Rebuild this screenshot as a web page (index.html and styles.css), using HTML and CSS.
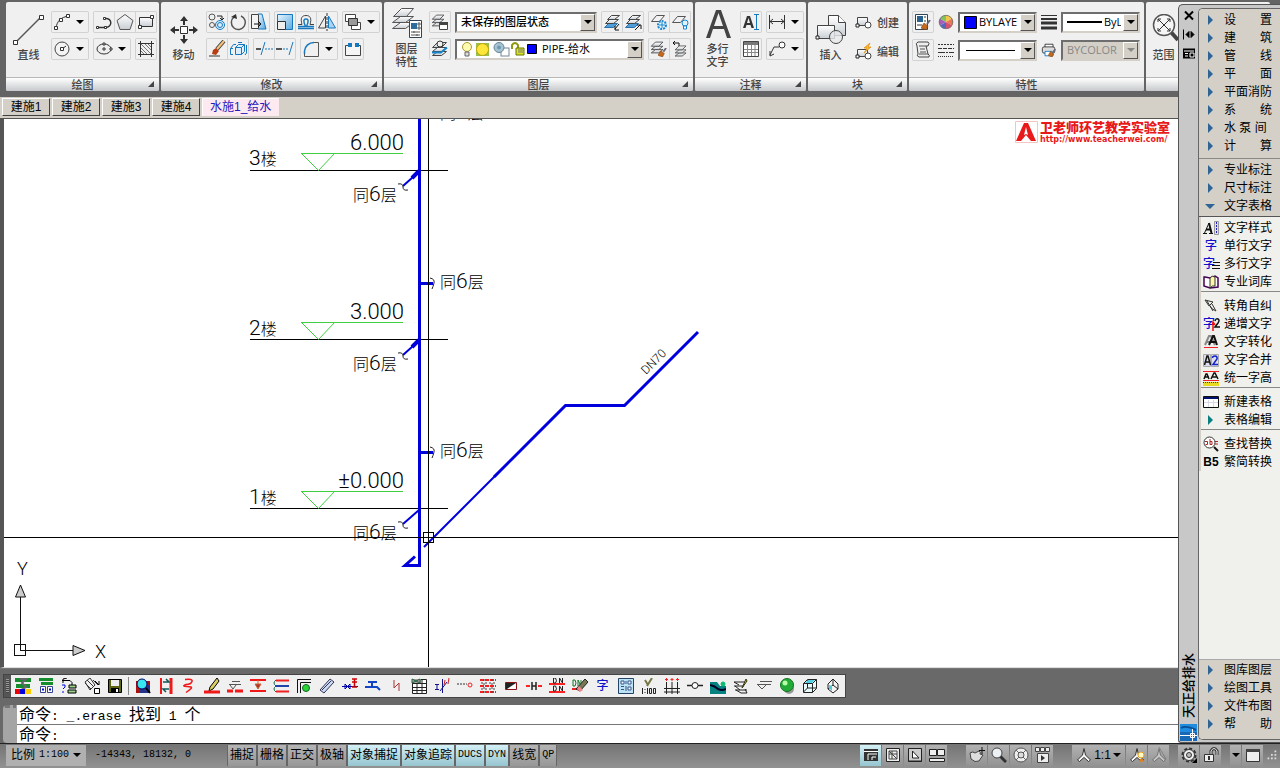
FILE: index.html
```html
<!DOCTYPE html>
<html lang="zh-CN">
<head>
<meta charset="utf-8">
<title>天正给排水</title>
<link rel="stylesheet" href="styles.css">
</head>
<body>
<svg class="defs" aria-hidden="true">
<defs>
<linearGradient id="steel" x1="0" y1="0" x2="0" y2="1"><stop offset="0" stop-color="#fff"/><stop offset="1" stop-color="#c9ced4"/></linearGradient>
<linearGradient id="sky" x1="0" y1="0" x2="1" y2="1"><stop offset="0" stop-color="#eaf6ff"/><stop offset="1" stop-color="#5aa9e0"/></linearGradient>
<symbol id="stack" viewBox="0 0 18 18"><g fill="url(#steel)" stroke="#444"><path d="M1.5 15.5h9l5-4h-9z"/><path d="M1.5 11.5h9l5-4h-9z"/><path d="M1.5 7.500h9l5-5h-9z"/></g></symbol>
<symbol id="bluestack" viewBox="0 0 18 18"><path fill="#4f9fdc" stroke="#2c6ea6" d="M1.500 14.500h9l4-4h-9z"/><g fill="url(#steel)" stroke="#444"><path d="M2.500 10.500h8l5-4h-9z"/><path d="M4.500 6.500h7l5-4h-8z"/></g></symbol>
<symbol id="brush" viewBox="0 0 10 10"><path d="M9 0 6 4" stroke="#667" stroke-width="2"/><path d="M3 3 7 6 5 10 0 8z" fill="#c4691d" stroke="#7a3a0b" stroke-width=".6"/></symbol>
<symbol id="person" viewBox="0 0 16 16"><path d="M8 1.500 6.500 8 1.500 13l2 1.500 4.500-4 4.500 4 2-1.500-5-5z" fill="#f5f5f5" stroke="#333"/></symbol>
</defs>
</svg>
<div class="app">
<header class="ribbon">
  <section class="panel draw">
    <div class="body">
      <button class="big"><svg width="32" height="32" viewBox="0 0 32 32"><path d="M3 28 28 3" stroke="#555" stroke-width="1.500"/><path d="M.5 26.500h4v4h-4zM26.500 1.500h4v4h-4z" fill="#fff" stroke="#333"/></svg><span>直线</span></button>
      <div class="rows">
        <div class="row">
          <div class="group"><button aria-label="圆弧"><svg width="18" height="18" viewBox="0 0 18 18" fill="none"><path d="M3 15C4 8 8 4 16 3" stroke="#333"/><path d="M1.500 13.500h3v3h-3zM6.500 5.500h3v3h-3zM13.500 1.500h3v3h-3z" fill="#fff" stroke="#333"/></svg></button><button class="dd" aria-label="圆弧选项"></button></div>
          <div class="group"><button aria-label="多段线"><svg width="18" height="18" viewBox="0 0 18 18" fill="none"><path d="M3 14.500h8c7-1 6-10-1-9" stroke="#333" stroke-width="1.500"/><path d="M1.500 13.500h2v2h-2zM9.500 13.500h2v2h-2zM8.500 4.500h2v2h-2z" fill="#fff" stroke="#333"/></svg></button><button aria-label="多边形"><svg width="18" height="18" viewBox="0 0 18 18"><path d="m9 1.500 8 6-3 9H4l-3-9z" fill="url(#steel)" stroke="#555"/></svg></button><button aria-label="矩形"><svg width="18" height="18" viewBox="0 0 18 18"><path d="M2.500 4.500h13v9h-13z" fill="url(#steel)" stroke="#333"/><path d="M1.500 12.500h3v3h-3zM13.500 2.500h3v3h-3z" fill="#fff" stroke="#333"/></svg></button></div>
        </div>
        <div class="row">
          <div class="group"><button aria-label="圆"><svg width="18" height="18" viewBox="0 0 18 18"><circle cx="9" cy="9" r="7" fill="#f4f4f4" stroke="#444"/><path d="m9 9 4-3" stroke="#333"/><path d="M7.500 7.500h3v3h-3z" fill="#fff" stroke="#333"/></svg></button><button class="dd" aria-label="圆选项"></button></div>
          <div class="group"><button aria-label="椭圆"><svg width="18" height="18" viewBox="0 0 18 18"><ellipse cx="9" cy="9" rx="7" ry="5" fill="#eee" stroke="#333"/><path d="M8 8h2v2H8zM15 8h2v2h-2zM8 3h2v2H8z" fill="#fff" stroke="#333"/></svg></button><button class="dd" aria-label="椭圆选项"></button></div>
          <div class="group"><button aria-label="图案填充"><svg width="18" height="18" viewBox="0 0 18 18" fill="none"><path d="M4 8l6 6M4 11l3 3M4 4l10 10M8 4l6 6M11 4l3 3" stroke="#777"/><path d="M1 3.500h16M1 14.500h16M3.500 1v16M14.500 1v16" stroke="#333"/></svg></button></div>
        </div>
      </div>
    </div>
    <footer><span>绘图</span><i class="launch"></i></footer>
  </section>

  <section class="panel modify">
    <div class="body">
      <button class="big"><svg width="32" height="32" viewBox="0 0 32 32"><path d="m16 2 4 5h-3v4h-2V7h-3zM16 30l4-5h-3v-4h-2v4h-3zM2 16l5-4v3h4v2H7v3zM30 16l-5-4v3h-4v2h4v3z" fill="#333"/><path d="M12.500 12.500h7v7h-7z" fill="#fff" stroke="#333"/></svg><span>移动</span></button>
      <div class="rows">
        <div class="row">
          <div class="group"><button aria-label="复制"><svg width="18" height="18" viewBox="0 0 18 18" fill="none"><circle cx="4" cy="4" r="3" stroke="#555"/><circle cx="4" cy="12" r="2.500" stroke="#555"/><circle cx="12" cy="12" r="4.500" fill="#d8edfa" stroke="#1679c0"/><circle cx="12" cy="12" r="2.500" stroke="#1679c0"/><path d="M9 3h5v3m-2-1 2 2 2-2" stroke="#222"/></svg></button><button aria-label="旋转"><svg width="18" height="18" viewBox="0 0 18 18"><path d="M5 4a7 7 0 1 0 7-1" fill="none" stroke="#555" stroke-width="1.500"/><path d="m7 1 1 5-6-2z" fill="#333"/></svg></button><button aria-label="拉伸"><svg width="18" height="18" viewBox="0 0 18 18"><path d="M8 1h4l4 15H8z" fill="url(#sky)" stroke="#1679c0"/><path d="M1.500 1.500h7v14h-7z" fill="#f4f4f4" stroke="#444"/><path d="M4 11h7m-3-3 3 3-3 3" fill="none" stroke="#111"/></svg></button></div>
          <div class="group"><button aria-label="缩放"><svg width="18" height="18" viewBox="0 0 18 18"><path d="M1.500 1.500h15v15h-7v-8h-8z" fill="url(#sky)" stroke="#1679c0"/><path d="M1.500 8.500h8v8h-8z" fill="#eee" stroke="#333"/></svg></button><button aria-label="偏移"><svg width="18" height="18" viewBox="0 0 18 18" fill="none"><path d="M1 11.500h4C3 5 5 2.500 9 2.500s6 2.500 4 9h4" stroke="#444"/><path d="M1 15.500h16M1 13.500h7.500C6 8 6.500 6 9 6s3 2 .5 7.500H17" stroke="#1679c0" stroke-width="1.500"/></svg></button><button aria-label="镜像"><svg width="18" height="18" viewBox="0 0 18 18"><path d="M7.500 3v12h-7z" fill="#eee" stroke="#444"/><path d="M10.500 3v12h7z" fill="#a9d4f5" stroke="#1679c0"/><path d="M9 0v18" stroke="#333" stroke-dasharray="3 1"/></svg></button></div>
          <div class="group"><button aria-label="绘图次序"><svg width="18" height="18" viewBox="0 0 18 18"><path d="M1.500 1.500h10v7h-10zM7.500 9.500h9v7h-9z" fill="#fff" stroke="#444"/><path d="M4.500 5.500h9v7h-9z" fill="#999" stroke="#333"/></svg></button><button class="dd" aria-label="绘图次序选项"></button></div>
        </div>
        <div class="row">
          <div class="group"><button aria-label="删除"><svg width="18" height="18" viewBox="0 0 18 18"><path d="m16 1-7 8" stroke="#444" stroke-width="4"/><path d="M16 1 9 9" stroke="#f5c37b" stroke-width="2"/><path d="m8 8-3 2-1 4 4 1 3-4z" fill="#b83e12"/><path d="M1 16h11" stroke="#333"/></svg></button><button aria-label="分解"><svg width="18" height="18" viewBox="0 0 18 18"><path d="M6.500 7.500h6v7h-6zl3-3h6l-3 3M15.500 4.500v7l-3 3" fill="#d9effc" stroke="#1679c0"/><path d="M4 8.500H1.500v6H4M1.500 8.500l3-4H7M9 2.500h4M17.500 5v8L16 15" fill="none" stroke="#1679c0"/></svg></button></div>
          <div class="group"><button aria-label="修剪"><svg width="18" height="18" viewBox="0 0 18 18"><path d="M1 9h5" stroke="#222" stroke-width="1.500"/><path d="M10 2 6 15" stroke="#1679c0"/><path d="M10 9h8" stroke="#1679c0" stroke-dasharray="2 1"/></svg></button><button aria-label="延伸"><svg width="18" height="18" viewBox="0 0 18 18"><path d="M0 9h6" stroke="#222" stroke-width="1.500"/><path d="M7 9h6" stroke="#1679c0" stroke-dasharray="2 1"/><path d="m17 2-4 13" stroke="#1679c0"/></svg></button></div>
          <div class="group"><button aria-label="圆角"><svg width="18" height="18" viewBox="0 0 18 18" fill="none"><path d="M2.500 14V11C3 6 7 2.500 12 2.500" stroke="#1679c0" stroke-width="1.500"/><path d="M12 2.500h4.500v14h-14v-3" stroke="#555"/></svg></button><button class="dd" aria-label="圆角选项"></button></div>
          <div class="group"><button aria-label="打断"><svg width="18" height="18" viewBox="0 0 18 18"><path d="M5 5.500H1.500v10h15v-10H13" fill="#f5f5f5" stroke="#444"/><path d="M4 3h4v4H4zM11 3h4v4h-4z" fill="#1679c0"/></svg></button></div>
        </div>
      </div>
    </div>
    <footer><span>修改</span><i class="launch"></i></footer>
  </section>

  <section class="panel layers">
    <div class="body">
      <button class="big"><svg width="32" height="32" viewBox="0 0 32 32"><g fill="url(#steel)" stroke="#555"><path d="M1.500 20.500h13l8-6h-13z"/><path d="M1.500 14.500h13l8-6h-13z"/><path d="M2.500 8.500h13l7-8h-12z"/></g><path d="M18.500 12.500h12v17h-12z" fill="#fff" stroke="#345"/><path d="M20 15h6v6h-6z" fill="#2d6d9d"/><path d="M27 15h2v2h-2zM27 19h2v2h-2zM20 24h9M20 27h9M23 23v2M26 26v2" stroke="#555" fill="none"/></svg><span>图层<br>特性</span></button>
      <div class="rows">
        <div class="row">
          <div class="group"><button aria-label="图层状态"><svg width="18" height="18" viewBox="0 0 18 18"><use href="#stack" width="15" height="15"/><path d="M8.500 9.500h8v7h-8z" fill="#fff" stroke="#444"/><path d="M8 9h9v3H8z" fill="#444"/></svg></button></div>
          <div class="combo state"><select aria-label="图层状态"><option>未保存的图层状态</option></select><span class="arrow"></span></div>
          <div class="group"><button aria-label="隔离"><svg width="18" height="18" viewBox="0 0 18 18"><use href="#bluestack"/><path d="m16 11-4 5m0-3v4h4" fill="none" stroke="#111"/></svg></button><button aria-label="取消隔离"><svg width="18" height="18" viewBox="0 0 18 18"><use href="#bluestack"/><path d="m11 17 5-5m-3 0h4v4" fill="none" stroke="#111"/></svg></button></div>
          <div class="group"><button aria-label="冻结"><svg width="18" height="18" viewBox="0 0 18 18" fill="none"><path d="M1.500 8.500h8l5-6h-8z" fill="#f2f2f2" stroke="#555"/><circle cx="12" cy="12" r="4" fill="#eaf6ff" stroke="#1887d0" stroke-width="2" stroke-dasharray="2 1"/><path d="M12 9v6M9 12h6" stroke="#1887d0"/></svg></button><button aria-label="关闭"><svg width="18" height="18" viewBox="0 0 18 18"><path d="M1.500 9.500h8l5-6h-8z" fill="#f2f2f2" stroke="#555"/><circle cx="14" cy="10" r="3" fill="#dff2ff" stroke="#1887d0"/><path d="M12.500 13h3v3h-3z" fill="#fff" stroke="#1887d0"/></svg></button></div>
        </div>
        <div class="row">
          <div class="group"><button aria-label="置为当前"><svg width="18" height="18" viewBox="0 0 18 18"><use href="#stack"/><path d="M1 12.500h9l6-5" fill="none" stroke="#1887d0" stroke-width="2"/><circle cx="9" cy="4" r="3" fill="#eee" stroke="#333"/></svg></button></div>
          <div class="combo layer"><svg width="81" height="16" viewBox="0 0 81 16"><circle cx="6" cy="6" r="4.500" fill="#fffbb0" stroke="#aa9b33"/><path d="M4 11h4v4H4z" fill="#ddd" stroke="#666"/><rect x="15" y="2" width="13" height="13" fill="#9abf4a"/><circle cx="21.500" cy="8.500" r="6" fill="#ffe638" stroke="#b9a212"/><rect x="40" y="7" width="8" height="8" fill="#fff" stroke="#789"/><circle cx="38" cy="6.500" r="5" fill="#a8c4d2" stroke="#648296"/><circle cx="38" cy="6.500" r="2" fill="#6f99b2"/><path d="M51 8V4q3-4 6 0v7" fill="none" stroke="#8d9a10" stroke-width="2"/><path d="M55 7h8v7h-8z" fill="#d9e229" stroke="#667400"/><path d="M57 9h5M57 11h5" stroke="#777"/><path d="M66.500 3.500h9v9h-9z" fill="#00f" stroke="#000"/></svg><select aria-label="图层"><option>PIPE-给水</option></select><span class="arrow"></span></div>
          <div class="group"><button aria-label="匹配图层"><svg width="18" height="18" viewBox="0 0 18 18"><use href="#stack" width="15" height="15"/><use href="#brush" x="8" y="8" width="9" height="9"/></svg></button><button aria-label="上一个图层"><svg width="18" height="18" viewBox="0 0 18 18"><use href="#stack" x="3" y="4" width="14" height="14"/><path d="M2 3h6v3M4 1 2 3l2 2" fill="none" stroke="#111"/></svg></button></div>
        </div>
      </div>
    </div>
    <footer><span>图层</span><i class="launch"></i></footer>
  </section>

  <section class="panel notes">
    <div class="body">
      <button class="big"><svg width="32" height="32" viewBox="0 0 32 32"><path d="M14 2h5l10 28h-4l-3-9H11l-3 9H4zM12 18h9L16.500 5z" fill="#444" fill-rule="evenodd"/></svg><span>多行<br>文字</span></button>
      <div class="rows">
        <div class="row">
          <div class="group"><button aria-label="单行文字"><svg width="18" height="18" viewBox="0 0 18 18"><path d="M5 3h3l4 12H9.500l-1-3h-4l-1 3H1zM5 10h3L6.500 5z" fill="#333" fill-rule="evenodd"/><path d="M12 1.500h5M14.500 2v14M12 16.500h5" stroke="#1679c0"/></svg></button></div>
          <div class="group"><button aria-label="标注"><svg width="18" height="18" viewBox="0 0 18 18"><path d="M1.500 2v14M16.500 2v14M2 8.500h14M5 6 2 8.500 5 11M13 6l3 2.500-3 2.500" fill="none" stroke="#333"/></svg></button><button class="dd" aria-label="标注选项"></button></div>
        </div>
        <div class="row">
          <div class="group"><button aria-label="表格"><svg width="18" height="18" viewBox="0 0 18 18"><path d="M1.500 1.500h15v15h-15z" fill="#fff" stroke="#444"/><path d="M2 2h14v3H2z" fill="#777"/><path d="M2 9.500h14M2 12.500h14M5.500 5v11M9.500 5v11M13 5v11" stroke="#888"/></svg></button></div>
          <div class="group"><button aria-label="引线"><svg width="18" height="18" viewBox="0 0 18 18"><path d="m2 15 4-8h5M2 11v5l4-2" fill="none" stroke="#333"/><circle cx="14" cy="5" r="3" fill="#fff" stroke="#333"/></svg></button><button class="dd" aria-label="引线选项"></button></div>
        </div>
      </div>
    </div>
    <footer><span>注释</span><i class="launch"></i></footer>
  </section>

  <section class="panel block">
    <div class="body">
      <button class="big"><svg width="32" height="32" viewBox="0 0 32 32"><path d="M13.500 1.500h10l7 7v13h-17z" fill="url(#steel)" stroke="#444"/><path d="M23.500 1.500v7h7" fill="#fff" stroke="#444"/><path d="M2.500 11.500h17v13h-17z" fill="url(#steel)" stroke="#444"/><circle cx="21" cy="23" r="6.500" fill="#e8eaec" fill-opacity=".8" stroke="#444"/><path d="M1 22h3v3H1z" fill="#fff" stroke="#222"/></svg><span>插入</span></button>
      <div class="rows">
        <button class="wide"><svg width="18" height="18" viewBox="0 0 18 18"><path d="M2.500 3.500h10v8h-10z" fill="url(#steel)" stroke="#444"/><circle cx="13" cy="11" r="3" fill="#fff" stroke="#444"/><path d="M1 10h3v3H1z" fill="#fff" stroke="#222"/></svg>创建</button>
        <button class="wide"><svg width="18" height="18" viewBox="0 0 18 18"><path d="M2.500 6.500h10v7h-10z" fill="url(#steel)" stroke="#444"/><circle cx="13" cy="13" r="3" fill="#fff" stroke="#444"/><path d="M1 12h3v3H1z" fill="#fff" stroke="#222"/><path d="m15 0-6 5h3l-3 5 7-6h-3z" fill="#ffbd24" stroke="#d57c00" stroke-width=".6"/></svg>编辑</button>
      </div>
    </div>
    <footer><span>块</span><i class="launch"></i></footer>
  </section>

  <section class="panel props">
    <div class="body">
      <div class="rows">
        <div class="row">
          <div class="group"><button aria-label="特性匹配"><svg width="18" height="18" viewBox="0 0 18 18"><path d="M1.500 1.500h12v15h-12z" fill="#fff" stroke="#345"/><path d="M3 3h6v6H3z" fill="#28608e"/><path d="M10 4h2M10 8h2M3 12h5" stroke="#333"/><use href="#brush" x="7" y="7" width="10" height="10"/></svg></button></div>
          <svg class="lead" viewBox="0 0 18 18"><path d="M9 9V1a8 8 0 0 1 7 4z" fill="#f4c64a"/><path d="m9 9 7-4a8 8 0 0 1 0 8z" fill="#ee7652"/><path d="m9 9 7 4a8 8 0 0 1-7 4z" fill="#d8506a"/><path d="M9 9v8a8 8 0 0 1-7-4z" fill="#5267c4"/><path d="m9 9-7 4a8 8 0 0 1 0-8z" fill="#a75fb5"/><path d="M9 9 2 5a8 8 0 0 1 7-4z" fill="#82c35b"/><circle cx="9" cy="9" r="7.500" fill="none" stroke="#777"/></svg>
          <div class="combo prop"><svg width="13" height="13" viewBox="0 0 13 13"><path d="M.5.500h12v12H.5z" fill="#00f" stroke="#000"/></svg><select aria-label="颜色"><option>BYLAYER</option></select><span class="arrow"></span></div>
          <svg class="lead" viewBox="0 0 16 16"><path d="M0 1.500h16" stroke="#333"/><path d="M0 5h16" stroke="#333" stroke-width="2"/><path d="M0 9h16M0 14h16" stroke="#333" stroke-width="3"/></svg>
          <div class="combo prop"><svg width="35" height="13" viewBox="0 0 35 13"><path d="M0 6h35" stroke="#000" stroke-width="2"/></svg><select aria-label="线宽"><option>ByLayer</option></select><span class="arrow"></span></div>
        </div>
        <div class="row">
          <div class="group"><button aria-label="列表"><svg width="18" height="18" viewBox="0 0 18 18"><path d="M4 1h10q2 1 0 4h-2l2 8q2 1 1 3H5q-3-1-1-3l-1-8Q1 2 4 1z" fill="#eee" stroke="#444"/><path d="M5 5h7M6 8h5M6 11h6M5 13h9" stroke="#555"/></svg></button></div>
          <svg class="lead" viewBox="0 0 16 16"><path d="M0 2.500h16" stroke="#333" stroke-dasharray="2 1"/><path d="M0 6.500h16" stroke="#333" stroke-dasharray="4 1"/><path d="M0 10.500h16" stroke="#333" stroke-dasharray="7 1 2 1"/><path d="M0 14.500h16" stroke="#333" stroke-dasharray="1 1"/></svg>
          <div class="combo prop"><svg width="51" height="13" viewBox="0 0 51 13"><path d="M2 6.500h49" stroke="#000"/></svg><select aria-label="线型"><option></option></select><span class="arrow"></span></div>
          <svg class="lead" viewBox="0 0 18 18"><path d="M4.500 6V2.500h9V6" fill="#fff" stroke="#333"/><rect x="1.500" y="5.500" width="14" height="7" rx="2" fill="#ddd" stroke="#333"/><path d="M4.500 10.500h8l1 5h-9z" fill="#fff" stroke="#1679c0"/><use href="#brush" x="8" y="8" width="9" height="9"/></svg>
          <div class="combo prop off"><select aria-label="打印样式" disabled><option>BYCOLOR</option></select><span class="arrow"></span></div>
        </div>
      </div>
    </div>
    <footer><span>特性</span></footer>
  </section>

  <section class="panel range">
    <div class="body">
      <button class="big"><svg width="32" height="32" viewBox="0 0 32 32"><path d="m22 17 8 9" stroke="#444" stroke-width="4"/><circle cx="16" cy="10" r="10.500" fill="#f6f6f6" stroke="#555" stroke-width="1.500" transform="translate(0 1)"/><path d="m10 5 12 12M22 5 10 17M10 8V5h3M19 5h3v3M10 14v3h3M19 17h3v-3" fill="none" stroke="#333"/></svg><span>范围</span></button>
    </div>
    <footer></footer>
  </section>
</header>

<nav class="tabs">
  <button>建施1</button><button>建施2</button><button>建施3</button><button>建施4</button><button class="on">水施1_给水</button>
</nav>

<main class="canvas">
<svg class="drawing" width="100%" height="100%">
<g transform="translate(-4 -119)">
  <g stroke="#000" shape-rendering="crispEdges"><path d="M250 170.500h198M250 339.500h198M250 508.500h198"/></g>
  <g stroke="#3fcf3f" fill="none"><path d="M301 153.500h102M301.500 153.500l17 17 16-17M301 322.500h102M301.500 322.500l17 17 16-17M301 491.500h102M301.500 491.500l17 17 16-17"/></g>
  <g stroke="#00d" fill="none" stroke-width="3"><path d="M419.500 118V565.500H405l10-9M419 283.500h14M419 452.500h14"/><path d="m419 171-7 7M419 340l-7 7" stroke-width="4"/><path d="m413 177-10 9M413 346l-10 9M419 510l-16 14" stroke-width="2"/><path d="m424 547 74-74" stroke-width="2"/><path d="m494 477 71.500-71.500h59L698 332"/></g>
  <g stroke="#222" fill="none"><path d="M398 184q5-1 5 3t5 3M398 353q5-1 5 3t5 3M398 522q5-1 5 3t5 3M430 278q5 1 4 5t-2 6M430 447q5 1 4 5t-2 6"/></g>
  <g class="level"><text x="404" y="150">6.000</text><text x="404" y="319">3.000</text><text x="404" y="488">±0.000</text></g>
  <g class="floor"><text x="249" y="165"><tspan class="num">3</tspan>楼</text><text x="249" y="335"><tspan class="num">2</tspan>楼</text><text x="249" y="504"><tspan class="num">1</tspan>楼</text></g>
  <g class="same"><text x="353" y="201">同<tspan class="num">6</tspan>层</text><text x="353" y="370">同<tspan class="num">6</tspan>层</text><text x="353" y="539">同<tspan class="num">6</tspan>层</text><text x="440" y="119">同<tspan class="num">6</tspan>层</text><text x="440" y="288">同<tspan class="num">6</tspan>层</text><text x="440" y="457">同<tspan class="num">6</tspan>层</text></g>
  <text class="dn" transform="translate(646 375) rotate(-45)">DN70</text>
  <g fill="none" stroke="#111" shape-rendering="crispEdges"><path d="M14.500 644.500h11v11h-11zM20.500 650V597M20 650.500h53"/></g>
  <path d="m20.500 585-5 12h10zM85 650.500l-12-5v10z" fill="#ccc" stroke="#111"/>
  <g class="axis"><text x="17" y="575">Y</text><text x="95" y="658">X</text></g>
</g>
<g class="cross"><path d="M419.500 413.500h10v10h-10z"/><line x1="0" y1="418.500" x2="100%" y2="418.500"/><line x1="424.500" y1="0" x2="424.500" y2="100%"/></g>
</svg>
<div class="mark"><svg width="23" height="22" viewBox="0 0 23 22"><path d="M.5.500h22v21H.5z" fill="#fff" stroke="#f3c4c4"/><path d="M9 2h4l8 18h-5l-5-6-5 6H1z" fill="#e81919"/><path d="m11 6 2 8-2-1-2 1z" fill="#fff"/></svg><p><b>卫老师环艺教学实验室</b><a href="#">http://www.teacherwei.com/</a></p></div>
</main>

<div class="dock">
<div class="tools" role="toolbar">
<i class="grip"></i>
<button aria-label="管线设置"><svg viewBox="0 0 16 16"><path d="M0 0h16v4H0zM1 6h14v4H1z" fill="#178c2d"/><path d="M5 1h6l-4 4 4 4-5 3" stroke="#666" stroke-width="2" fill="none"/><path d="M0 11h5v5H0z" fill="#e00"/><path d="M5 11h5v5H5z" fill="#00d"/><path d="M10 11h6v5h-6z" fill="#fc0"/></svg></button>
<button aria-label="图层"><svg viewBox="0 0 16 16"><path d="M1 0h14v3H1zM3 4h12v3H3z" fill="#178c2d"/><path d="M2.500 8.500h5v6h-5zM9.500 8.500h5v6h-5z" fill="#fff" stroke="#348"/><path d="M5 10v3M12 10v3M4 11.500h2M11 11.500h2" stroke="#00d"/></svg></button>
<button aria-label="查询"><svg viewBox="0 0 16 16"><path d="M1 2.500h8l2 2v4M2 5V1l4-1" fill="none" stroke="#000"/><path d="M8 7h7v3H8zM7 12h8v3H7z" fill="#9bd08e" stroke="#000"/><path d="M1 7h3v2l-2 2M2 13v2" stroke="#00d" fill="none"/></svg></button>
<button aria-label="替换"><svg viewBox="0 0 16 16"><path d="m1 4 5-4 5 7-5 5zM3 2l7 7M1 5l6 6M9 2l5 5" fill="none" stroke="#333"/><path d="m11 3 4 4M15 3v4M10.500 10.500h5v5h-5z" fill="#fff" stroke="#000"/></svg></button>
<button aria-label="保存"><svg viewBox="0 0 16 16"><path d="M1.500 1.500h13v13h-13z" fill="#5c6414" stroke="#000"/><path d="M4 2h8v6H4z" fill="#eee"/><path d="M4 10h8v5H4z" fill="#000"/><path d="M9 11h2v3H9z" fill="#fff"/></svg></button>
<i class="sep"></i>
<button aria-label="查找"><svg viewBox="0 0 16 16"><path d="M1 3h14v12H1z" fill="#a11"/><path d="M5 7h10v8H5z" fill="#238"/><circle cx="7" cy="6" r="5" fill="#38e6ef" stroke="#006"/><path d="m11 10 4 5" stroke="#000" stroke-width="2"/></svg></button>
<button aria-label="立管"><svg viewBox="0 0 16 16"><path d="M3 0v16" stroke="#f01818" stroke-width="2"/><path d="M13 0v16" stroke="#f01818" stroke-width="3"/><path d="M5 4h6L8 1M11 11H5l3 3" fill="none" stroke="#155" stroke-width="1.500"/></svg></button>
<button aria-label="曲线"><svg viewBox="0 0 16 16"><path d="M4 1.500q8-1 7 2t-6 3q-5 2 1 2t4 2-5 4" fill="none" stroke="#f01818" stroke-width="1.500"/></svg></button>
<button aria-label="绘管"><svg viewBox="0 0 16 16"><path d="m13 0-7 9-1 4 4-2 6-8z" fill="#dbcf61" stroke="#000"/><path d="M0 14h16" stroke="#f01818" stroke-width="3"/></svg></button>
<button aria-label="标高"><svg viewBox="0 0 16 16"><path d="M5 3.500h8M2 6.500h12M3 7l3 4 3-4" fill="none" stroke="#555"/><path d="M0 13h6M8 13h8" stroke="#f01818" stroke-width="3"/></svg></button>
<button aria-label="喷头"><svg viewBox="0 0 16 16"><path d="M0 2h16M0 13h16" stroke="#f01818" stroke-width="2"/><path d="M8 2v4M5 6h6l-3 5z" fill="#a33" stroke="#c63"/></svg></button>
<button aria-label="多管"><svg viewBox="0 0 16 16"><path d="M3 2.500h13" stroke="#e22" stroke-width="2"/><path d="M3 8h13" stroke="#24a" stroke-width="2"/><path d="M3 13.500h13" stroke="#e22" stroke-width="2"/><path d="M3 2q-4 3 0 6-4 3 0 6" fill="none" stroke="#164"/></svg></button>
<button aria-label="转角"><svg viewBox="0 0 16 16"><path d="M1.500 15V1.500H15M4.500 15V4.500H15" fill="none" stroke="#111"/><circle cx="10" cy="10" r="3.500" fill="#28d333" stroke="#162"/></svg></button>
<button aria-label="管道"><svg viewBox="0 0 16 16"><path d="m1 12 10-11 4 3-10 11z" fill="#ccd9f3" stroke="#335"/><path d="m3 12 9-9" stroke="#335"/></svg></button>
<button aria-label="阀门"><svg viewBox="0 0 16 16"><path d="M0 8.500h16M3 6v5l5-5v5z" fill="none" stroke="#00a"/><path d="M10 1h5M10 4h5M12.500 1v7M10 9h5" fill="none" stroke="#c00" stroke-width="1.500"/></svg></button>
<button aria-label="龙头"><svg viewBox="0 0 16 16"><path d="M0 9h12l3 3M7 9V4M3 4h9" stroke="#1245c5" stroke-width="2" fill="none"/></svg></button>
<button aria-label="立管线"><svg viewBox="0 0 16 16"><path d="M6 2v8l5-5v8" stroke="#a33" fill="none"/></svg></button>
<button aria-label="材料表"><svg viewBox="0 0 16 16"><path d="M1.500 1.500h14v14h-14zM2 5.500h14M2 9.500h14M2 12.500h14M6 5v11M11 2v14" fill="#fff" stroke="#222"/><path d="M1 1h9v4H1z" fill="#b99"/><path d="m1 1 8 4V1L1 5z" fill="none" stroke="#164"/></svg></button>
<button aria-label="系统图"><svg viewBox="0 0 16 16"><path d="M1 6.500h4M1 11.500h4M3 6.500v5M8.500 1v14M6 13l7-9" fill="none" stroke="#118"/><path d="m11 2-1 5M15 0l-1 6" stroke="#c22"/></svg></button>
<button aria-label="连接"><svg viewBox="0 0 16 16"><path d="M0 6h10" stroke="#333" stroke-dasharray="2 1"/><circle cx="13" cy="7" r="2" fill="none" stroke="#e22"/></svg></button>
<button aria-label="喷淋"><svg viewBox="0 0 16 16"><path d="M0 2h16M0 8h16M0 14h16" stroke="#e22" stroke-width="2" stroke-dasharray="4 1"/><path d="M1 5h14M1 11h14M4 1v14M12 1v14" stroke="#444" stroke-dasharray="2 2"/></svg></button>
<button aria-label="消火栓"><svg viewBox="0 0 16 16"><path d="M2.500 4.500h11v7h-11z" fill="#fff" stroke="#811"/><path d="M3 5h10l-9 6H3z" fill="#222"/></svg></button>
<button aria-label="断管"><svg viewBox="0 0 16 16"><path d="M0 8h4M12 8h4" stroke="#f22" stroke-width="2"/><path d="M6 4v8M10 4v8M6 8h4" stroke="#222" stroke-width="1.500"/></svg></button>
<button aria-label="管径"><svg viewBox="0 0 16 16"><path d="M0 6h16M0 14h16" stroke="#f22" stroke-width="2"/><path d="M4.500 0v5h2q2-2 0-5zM10.500 5V0l3 5V0M4.500 8v5h2q2-2 0-5zM10.500 13V8l3 5V8" fill="none" stroke="#222"/></svg></button>
<button aria-label="修改管径"><svg viewBox="0 0 16 16"><path d="M1 2v6h2q2-3 0-6zM6 8V2l3 6V2" fill="none" stroke="#172"/><path d="M0 11h6" stroke="#e22" stroke-width="2"/><path d="m13 1 3 3-8 9-4-2z" fill="#775" stroke="#222"/><path d="m7 8 4 4-3 2-3-3z" fill="#e88"/></svg></button>
<button class="char" aria-label="文字">字</button>
<button aria-label="图例"><svg viewBox="0 0 16 16"><path d="M.5.500h15v15H.5z" fill="#bce2f4" stroke="#246"/><path d="M3 3h3v3H3zM10 3h3v3h-3zM8 3v3M3 8.500h3M3 11.500h3M10 9h3v3h-3zM8 8v5" fill="#fff" stroke="#358"/></svg></button>
<button aria-label="比例"><svg viewBox="0 0 16 16"><path d="m11 0-5 8M4 2l3 5" stroke="#774" stroke-width="2"/><path d="M1.500 10v6M4 11v1M4 14v1M6.500 10v6M8.500 10.500h2v5h-2zM12.500 10.500h2v5h-2z" fill="none" stroke="#222"/></svg></button>
<button aria-label="轴线"><svg viewBox="0 0 16 16"><path d="M0 10.500h16M0 14h16M2.500 4v12M8 4v12M13.500 4v12" stroke="#222"/><path d="M2.500 0v3M8 0v3M13.500 0v3M1 1.500h3M6.500 1.500h3M12 1.500h3" stroke="#e22"/></svg></button>
<button aria-label="节点"><svg viewBox="0 0 16 16"><path d="M0 7.500h16" stroke="#222" stroke-width="1.500"/><circle cx="8" cy="7.500" r="3" fill="#fff" stroke="#222"/></svg></button>
<button aria-label="地形"><svg viewBox="0 0 16 16"><path d="M0 4h7l3 4h6v8H0z" fill="#078080"/><path d="M0 7q5 1 8 4 4 2 8 0" fill="none" stroke="#002" stroke-width="2"/><circle cx="13" cy="6" r="2" fill="#1b7" stroke="#0b6"/></svg></button>
<button aria-label="编辑图层"><svg viewBox="0 0 16 16"><path d="M1 4h11M1 8h10M2 12h12M1 4l5 3M2 8l5 4M3 12l5 3h6l-2-4" fill="none" stroke="#222"/><path d="m13 1-4 9 5-7z" fill="#ec3" stroke="#331"/></svg></button>
<button aria-label="标高线"><svg viewBox="0 0 16 16"><path d="M4 3.500h12M1 6.500h14M2 7l4 4 4-4" fill="none" stroke="#555"/></svg></button>
<button aria-label="球体"><svg viewBox="0 0 16 16"><circle cx="10" cy="11" r="5" fill="#999"/><circle cx="8" cy="7" r="6.500" fill="#22ac35" stroke="#147122"/><circle cx="6" cy="5" r="2.500" fill="#b9ffa9"/></svg></button>
<button aria-label="立方体"><svg viewBox="0 0 16 16"><path d="M1.500 5.500h9v9h-9zM1.500 5.500l4-4h9v9l-4 4M10.500 5.500l4-4M5.500 2v8l-4 4M5.500 10h9" fill="#e7fbff" stroke="#222"/><path d="M3 5 6 2h7l-3 3z" fill="#52cfe0"/></svg></button>
<button aria-label="轴测"><svg viewBox="0 0 16 16"><path d="m8 1 5 5v5l-5 4-5-4V6z" fill="#f4f4f4" stroke="#222"/><path d="M8 1v6l5 4M8 7l-5 4" fill="none" stroke="#222"/><path d="m4 7 3 1v5l-3-3z" fill="#51cbd8"/></svg></button>
</div>
</div>

<section class="command">
  <i class="handle"></i>
  <div class="lines"><p><span>命令</span>: _.erase <span>找到</span> 1 <span>个</span></p><label><span>命令</span>:<input aria-label="命令行"></label></div>
</section>

<footer class="status">
  <button class="scale">比例 <span>1:100</span><i class="tri"></i></button>
  <output>-14343, 18132, 0</output>
  <div class="modes"><button>捕捉</button><button>栅格</button><button>正交</button><button>极轴</button><button class="on">对象捕捉</button><button class="on">对象追踪</button><button class="on latin">DUCS</button><button class="on latin">DYN</button><button>线宽</button><button class="latin">QP</button></div>
  <div class="right">
    <div class="set"><button class="on" aria-label="模型"><svg viewBox="0 0 16 16"><path d="M1 2h14v12H1z" fill="#333"/><path d="M5 13V7h9M9 13v-3h4M1 4.500h14" fill="none" stroke="#fff"/></svg></button><button aria-label="布局"><svg viewBox="0 0 16 16"><path d="M1.500 1.500h13v13h-13z" fill="#eee" stroke="#222"/><path d="M4 4h8v8H4zM4 7h8M7 4v8M4 4l8 8" fill="none" stroke="#444"/></svg></button><button aria-label="图纸"><svg viewBox="0 0 16 16"><path d="M1.500 1.500h13v13h-13z" fill="#ccc" stroke="#222"/><path d="M5.500 4v7H12zM1 14h14" fill="#fff" stroke="#222"/></svg></button><button aria-label="快速查看"><svg viewBox="0 0 16 16"><path d="M.5 2.500h7v6h-7zM8.500 2.500h7v6h-7zM.5 11.500h15v3H.5z" fill="#eee" stroke="#222"/></svg></button></div>
    <div class="set"><button aria-label="平移"><svg viewBox="0 0 16 16"><path d="M1 6q3-2 5 0l4-2q2 1 1 3l3 1-4 6q-4 2-8-2z" fill="#ddd" stroke="#444"/><path d="M13 0v7M10 3.500h6" stroke="#111"/></svg></button><button aria-label="缩放"><svg viewBox="0 0 16 16"><path d="m9 9 6 6" stroke="#333" stroke-width="3"/><circle cx="6" cy="6" r="5" fill="#edf1f3" stroke="#444"/></svg></button><button aria-label="控制盘"><svg viewBox="0 0 16 16"><circle cx="8" cy="8" r="7" fill="#eee" stroke="#555"/><circle cx="8" cy="8" r="3" fill="#ddd" stroke="#555"/><path d="m3 3 3 3M13 3l-3 3M3 13l3-3M13 13l-3-3" stroke="#666"/></svg></button><button aria-label="动画"><svg viewBox="0 0 16 16"><path d="M.5.500h4v4h-4zM5.500.500h4v4h-4zM10.500.500h4v4h-4zM2.500 6.500h11v9h-11z" fill="#eee" stroke="#444"/><path d="m6 8 4 3-4 3z" fill="#333"/></svg></button></div>
    <div class="set"><button class="anno"><svg viewBox="0 0 16 16"><use href="#person"/></svg>1:1<i class="tri"></i></button><button aria-label="注释可见性"><svg viewBox="0 0 16 16"><use href="#person"/><circle cx="12" cy="8" r="3" fill="#fffbc8" stroke="#e79f21"/><path d="M11 12h3v3h-3z" fill="#d8842b"/></svg></button><button aria-label="自动缩放"><svg viewBox="0 0 16 16" opacity=".45"><use href="#person"/><path d="m8 0 7 12" stroke="#555"/></svg></button></div>
    <div class="set tail"><button aria-label="工作空间"><svg viewBox="0 0 16 16"><circle cx="8" cy="8" r="6.500" fill="none" stroke="#333" stroke-width="2" stroke-dasharray="3 2"/><circle cx="8" cy="8" r="5.500" fill="#eee" stroke="#333"/><circle cx="8" cy="8" r="2.500" fill="#bbb" stroke="#333"/><path d="M16 11v5h-5z" fill="#000"/></svg></button><button aria-label="锁定"><svg viewBox="0 0 16 16"><path d="M8 7V4q3-5 6 0v4" fill="none" stroke="#333" stroke-width="3"/><path d="M8 7V4q3-5 6 0v4" fill="none" stroke="#eee"/><path d="M1.500 7.500h9v7h-9z" fill="#eee" stroke="#333"/><path d="M6 9v4" stroke="#333" stroke-width="2"/></svg></button></div>
    <div class="set"><button class="slim" aria-label="状态栏菜单"><i class="tri"></i></button><button aria-label="全屏"><svg viewBox="0 0 16 16"><path d="M1.500 2.500h13v12h-13z" fill="#eee" stroke="#333"/><path d="M1 2h14v3H1z" fill="#444"/></svg></button></div>
    <svg class="size" viewBox="0 0 16 16"><path d="M12 4h2v2h-2zM8 8h2v2H8zM12 8h2v2h-2zM4 12h2v2H4zM8 12h2v2H8zM12 12h2v2h-2z" fill="#ddd"/></svg>
  </div>
</footer>

<aside class="palette">
  <div class="spine">
    <button aria-label="关闭"><svg viewBox="0 0 14 12"><path d="m3 2 8 8M11 2l-8 8" stroke="#000" stroke-width="2"/></svg></button>
    <button aria-label="自动隐藏"><svg viewBox="0 0 14 12"><path d="M1.500 1v10M9 3v6l3-3zM7 3v6L4 6z" fill="#000" stroke="#000"/></svg></button>
    <button aria-label="特性"><svg viewBox="0 0 14 12"><path d="M1 1h12v10H1z" fill="#000"/><path d="M2 3.500h10M3 6h3M3 8.500h3M8 5.500h4v4H8z" fill="none" stroke="#fff"/></svg></button>
    <strong>天正给排水</strong>
    <svg class="logo" width="17" height="17" viewBox="0 0 17 17"><path d="M0 0h17v17H0z" fill="#1769b7"/><path d="M0 0h17v8H0z" fill="#1f8ce0"/><path d="M1 4q5-3 15 2" fill="none" stroke="#0b4f94" stroke-width="2"/><path d="M0 11.500h17M12.500 5v12M10.500 9.500h4v4h-4z" fill="none" stroke="#fff"/></svg>
  </div>
  <div class="menu">
    <ul class="tree">
      <li><a href="#"><i></i><span>设</span><span>置</span></a></li><li><a href="#"><i></i><span>建</span><span>筑</span></a></li><li><a href="#"><i></i><span>管</span><span>线</span></a></li><li><a href="#"><i></i><span>平</span><span>面</span></a></li><li><a href="#"><i></i>平面消防</a></li><li><a href="#"><i></i><span>系</span><span>统</span></a></li><li><a href="#"><i></i>水 泵 间</a></li><li><a href="#"><i></i><span>计</span><span>算</span></a></li>
      <li class="cut"><a href="#"><i></i>专业标注</a></li><li><a href="#"><i></i>尺寸标注</a></li><li><a href="#" class="open"><i></i>文字表格</a></li>
    </ul>
    <ul class="sub">
      <li><a href="#"><svg viewBox="0 0 16 16"><path d="M0 13.500h4M6 13.500h4M1.500 13 6 3" fill="none" stroke="#111"/><path d="m6 3 2.500 10M3 9.500h5" fill="none" stroke="#111" stroke-width="2"/><path d="M11.500 1.500h4v13h-4z" fill="#dde" stroke="#999"/><path d="M13.500 2v12" stroke="#22b" stroke-dasharray="2 1"/></svg>文字样式</a></li>
      <li><a href="#"><b>字</b>单行文字</a></li>
      <li><a href="#"><b class="l">字</b><svg class="mini" viewBox="0 0 8 14"><path d="M1 5.500h7M0 8.500h8M0 11.500h8" stroke="#111"/></svg>多行文字</a></li>
      <li><a href="#"><svg viewBox="0 0 16 16"><path d="M1 3v9l6 2 8-1V4l-3-2-5 2-5-1z" fill="#fff" stroke="#405" stroke-width="1.500"/><path d="M7 4q2-3 5-1v9q-3-1-5 2z" fill="#fff6aa" stroke="#333"/></svg>专业词库</a></li>
      <li class="cut"><a href="#"><svg viewBox="0 0 16 16"><path d="m2 2 8 2-4 4zM4 3l6 10M9 6l4 7q-5-2-6-5" fill="none" stroke="#333"/></svg>转角自纠</a></li>
      <li><a href="#"><b class="l">字</b><svg class="mini" viewBox="0 0 8 14"><path d="M1 14V6M0 8l1-3 2 3" stroke="#e11" fill="none" stroke-width="1.500"/><path d="M3 4q1-3 3-2t0 4L3 10h5" fill="none" stroke="#111" stroke-width="1.500"/></svg>递增文字</a></li>
      <li><a href="#"><svg viewBox="0 0 16 16"><path d="M2 11 6 2h2l4 9M4 8h6" fill="none" stroke="#888" stroke-width="2"/><path d="m6 11 4-9h1l3 9M8 8h5" fill="none" stroke="#111" stroke-width="2"/><path d="M1 13.500h14" stroke="#e22"/></svg>文字转化</a></li>
      <li><a href="#"><svg viewBox="0 0 16 16"><path d="M.5 2.500h7v12h-7zM8.500 2.500h7v12h-7z" fill="#dde" stroke="#aaa"/><path d="M1.500 13 4 4h1l2.500 9M2 10h5" stroke="#111" fill="none" stroke-width="1.500"/><path d="M9.500 6q0-2 2.500-2t2 3l-4 5.500h5" fill="none" stroke="#12c" stroke-width="1.500"/></svg>文字合并</a></li>
      <li><a href="#"><svg viewBox="0 0 16 16"><path d="M0 1.500h16M0 10.500h16" stroke="#e22"/><path d="m1 9 2-5h1l2 5M2 7h4M8 9l3-6h1l3 6M9 7h5" fill="none" stroke="#111" stroke-width="1.500"/><path d="M0 12h16v4H0z" fill="#e8da21"/><path d="M0 12.500h16" stroke="#333" stroke-dasharray="1 1"/></svg>统一字高</a></li>
      <li class="cut"><a href="#"><svg viewBox="0 0 16 16"><path d="M.5 2.500h15v11H.5z" fill="#fff" stroke="#111"/><path d="M1 3h14v2H1z" fill="#00126b"/><path d="M1 8.500h14M5.500 6v7M10.500 6v7" stroke="#d8d8e8"/></svg>新建表格</a></li>
      <li><a href="#" class="teal"><i></i>表格编辑</a></li>
      <li class="cut"><a href="#"><svg viewBox="0 0 16 16"><circle cx="6.500" cy="6.500" r="5.500" fill="#fff" stroke="#333"/><path d="m11 11 4 4" stroke="#111" stroke-width="2"/><path d="M2 5.500h2.500v3H2.500M7 3v5.500h2v-3H7M12 5.500h3M12 8h3" fill="none" stroke="#a22"/></svg>查找替换</a></li>
      <li><a href="#"><b class="b5">B5</b>繁简转换</a></li>
    </ul>
    <ul class="tree foot"><li><a href="#"><i></i>图库图层</a></li><li><a href="#"><i></i>绘图工具</a></li><li><a href="#"><i></i>文件布图</a></li><li><a href="#"><i></i><span>帮</span><span>助</span></a></li></ul>
  </div>
</aside>
</div>
</body>
</html>
```

FILE: styles.css
```css
* { box-sizing: border-box; }
body { margin: 0; font: 12px/16px "Liberation Sans", "Noto Sans CJK SC", sans-serif; color: #000; }
button, select, input { font: inherit; color: inherit; margin: 0; padding: 0; border: 0; background: none; }
p, ul { margin: 0; padding: 0; list-style: none; }
a { color: inherit; text-decoration: none; }
svg { display: block; flex: none; }
.defs { position: absolute; width: 0; height: 0; }
.app { position: relative; display: flex; flex-direction: column; height: 100vh; overflow: hidden; background: #696969; }

/* ribbon */
.ribbon { display: flex; gap: 2px; padding: 2px 10px 6px 6px; background: #646464; }
.panel { display: flex; flex-direction: column; flex: none; border-radius: 2px; background: #f0f0f0; overflow: hidden; color: #444; }
.draw { width: 153px; }
.modify { width: 221px; }
.layers { width: 309px; }
.notes { width: 111px; }
.block { width: 99px; }
.props { width: 235px; }
.range { flex: 1; }
.body { display: flex; height: 75px; }
.big { display: flex; flex-direction: column; align-items: center; justify-content: center; gap: 3px; width: 45px; padding-bottom: 3px; font-size: 11px; line-height: 13px; font-weight: 500; }
.range .big { width: 35px; }
.rows { display: flex; flex-direction: column; gap: 5px; padding-top: 9px; }
.row { display: flex; align-items: center; gap: 4px; height: 22px; }
.group { display: flex; height: 22px; border: 1px solid #d0d2d4; border-left: 0; border-radius: 2px; }
.group button { display: grid; place-items: center; width: 21px; border-left: 1px solid #d0d2d4; }
.group .dd { width: 16px; border: 0; }
.dd::after, .arrow::after, .tri { content: ""; border: 4px solid transparent; border-top: 4px solid #000; border-bottom: 0; }
.combo { display: flex; align-items: center; height: 21px; padding-left: 4px; background: #fff; border: 2px solid; border-color: #6e6e6e #d4d0c8 #d4d0c8 #6e6e6e; color: #000; font: 11px/16px "Open Sans", "Noto Sans CJK SC", sans-serif; }
.combo select { appearance: none; flex: 1; min-width: 0; overflow: hidden; text-overflow: clip; }
.arrow { display: grid; place-items: center; align-self: stretch; width: 15px; background: #d4d0c8; border: 1px solid; border-color: #fff #555 #555 #fff; }
.state { width: 142px; font-weight: 500; }
.layer { width: 189px; }
.prop { width: 79px; gap: 2px; }
.lead { width: 16px; height: 16px; }
.prop.off { background: #d4d0c8; color: #888; }
.prop.off select { opacity: 1; }
.off .arrow::after { border-top-color: #888; }
.props .rows { gap: 6px; padding-left: 3px; }
.wide { display: flex; align-items: center; gap: 4px; height: 24px; padding-left: 2px; font-size: 11px; font-weight: 500; }
.panel footer { display: flex; align-items: center; justify-content: center; position: relative; height: 14px; border-top: 1px solid #b8b8b8; background: linear-gradient(#fff, #c6c9cc); font-size: 11px; line-height: 12px; font-weight: 500; }
.launch { position: absolute; right: 5px; bottom: 4px; border: 3px solid #444; border-top-color: transparent; border-left-color: transparent; }

/* drawing tabs */
.tabs { display: flex; gap: 2px; height: 21px; padding: 1px 2px 2px; background: #d4d0c8; }
.tabs button { min-width: 48px; background: #d4d0c8; border: 1px solid; border-color: #fff #404040 #404040 #fff; }
.tabs .on { padding: 0 7px; background: #fdeaf0; border-color: #fff #fdeaf0 #fdeaf0 #fff; color: #2418c0; }

/* model space */
.canvas { position: relative; flex: 1; min-height: 0; border: solid #555; border-width: 1px 0 0 4px; border-bottom: 1px solid #ddd; background: #fff; overflow: hidden; }
.drawing text { fill: #000; }
.level text { font: 300 22px Roboto, sans-serif; text-anchor: end; }
.floor text, .same text { font: 300 16px "Noto Sans CJK SC", sans-serif; }
.drawing .num { font: 300 21px Roboto, sans-serif; }
.drawing .dn { font: 300 12px Roboto, sans-serif; }
.axis text { font: 300 18px Roboto, sans-serif; }
.cross { fill: none; stroke: #000; shape-rendering: crispEdges; }
.mark { position: absolute; right: 110px; top: 0; display: flex; gap: 2px; color: #e81919; }
.mark svg { margin-top: 2px; }
.mark p { display: flex; flex-direction: column; }
.mark b { font: 900 13px/16px "Noto Sans CJK SC", sans-serif; }
.mark a { font: 700 8px/9px "DejaVu Sans", sans-serif; }

/* tool strip */
.dock { display: flex; padding: 5px 3px 7px; border-top: 1px solid #777; }
.tools { display: flex; height: 24px; padding-right: 1px; border: 1px solid #444; background: #f0f0f0; }
.tools button { display: grid; place-items: center; width: 23px; }
.tools svg { width: 16px; height: 16px; }
.grip { width: 7px; background: repeating-linear-gradient(#999 0 1px, #444 1px 2px); border: solid #555; border-width: 4px 2px; }
.sep { width: 1px; margin: 2px; background: #888; }
.tools .char { color: #11c; font-size: 12px; font-weight: 500; }

/* command line */
.command { display: flex; margin-left: 3px; }
.handle { width: 14px; border-radius: 4px 0 0 4px; background: #a5a5a5; border-top: 3px dotted #777; }
.lines { flex: 1; background: #fff; font: 13px/16px "Liberation Mono", "Noto Sans CJK SC", monospace; }
.lines p { height: 20px; padding-left: 2px; border-bottom: 1px solid #777; white-space: pre; }
.lines label { display: flex; align-items: baseline; height: 18px; padding-left: 2px; }
.lines span { font: 16px/16px "Noto Sans CJK SC", sans-serif; }
.lines input { flex: 1; outline: 0; }

/* status bar */
.status { display: flex; align-items: center; height: 25px; padding: 1px 0 3px 6px; border-top: 1px solid #222; background: linear-gradient(#747474, #929292); }
.status button { display: flex; align-items: center; justify-content: center; gap: 4px; height: 21px; }
.scale { width: 80px; background: #b0b0b0; }
.scale span, .status output { font: 10px/16px "Liberation Mono", monospace; }
.status output { width: 141px; padding-left: 9px; }
.modes { display: flex; }
.modes button { padding: 0 2px; border: solid #666; border-width: 0 1px; background: linear-gradient(#b4b4b4, #989898); }
.modes .latin { font: 10px/16px "Liberation Mono", monospace; }
.status button.on { background: linear-gradient(#d3f0f6, #96c5d0); }
.right { display: flex; gap: 19px; margin-left: auto; padding-right: 2px; }
.set { display: flex; gap: 1px; }
.set button { width: 21px; background: linear-gradient(#b2b2b2, #929292); }
.set svg { width: 16px; height: 16px; }
.set .anno { width: 53px; font-size: 12px; gap: 2px; }
.set .slim { width: 11px; }
.right .tail { margin: 0 -10px; }
.size { width: 14px; height: 18px; margin-left: -18px; }

/* floating palette */
.palette { position: absolute; top: 4px; right: 0; bottom: 25px; display: flex; width: 102px; border: 1px solid #555; border-right: 0; border-radius: 5px 0 0 3px; background: #c8c8c8; }
.spine { display: flex; flex-direction: column; align-items: center; gap: 6px; width: 19px; padding: 4px 0 1px; }
.spine button svg { width: 14px; height: 13px; }
.spine strong { margin-top: auto; writing-mode: vertical-rl; text-orientation: sideways; transform: rotate(180deg); font-size: 13px; line-height: 16px; font-weight: 500; }
.menu { display: flex; flex-direction: column; flex: 1; margin: 3px 0 2px; border: 1px solid #666; border-right: 0; border-radius: 5px 0 0 5px; background: #f0f0ec; overflow: hidden; }
.menu li { height: 18px; }
.menu .cut { height: 24px; padding-top: 5px; border-top: 1px solid #888; }
.menu a { display: flex; align-items: center; justify-content: space-between; height: 18px; padding: 0 8px 0 25px; position: relative; white-space: nowrap; }
.tree { padding: 2px 0 1px; background: #d4d0c8; border-bottom: 1px solid #555; }
.menu .tree .cut { margin-top: 3px; height: 21px; padding-top: 2px; }
.tree i, .teal i { position: absolute; left: 9px; border: 5px solid transparent; border-left: 5px solid #2e6496; border-right: 0; }
.tree .open i { left: 6px; border: 5px solid transparent; border-top: 5px solid #2e6496; border-bottom: 0; }
.teal i { left: 7px; border-left-color: #0a7f7f; }
.sub { padding-top: 2px; border-left: 2px solid #d4d0c8; }
.sub a { padding-left: 23px; }
.sub a svg, .sub a b { position: absolute; left: 2px; width: 16px; height: 16px; }
.sub a b { color: #11c; text-align: center; font-weight: 500; line-height: 16px; }
.sub a b.l { text-align: left; }
.sub a .mini { left: 11px; width: 8px; height: 14px; }
.sub a .b5 { color: #000; font-weight: 700; }
.tree.foot { margin-top: auto; padding: 1px 0 6px; border-top: 1px solid #aaa; border-bottom: 0; }
```
